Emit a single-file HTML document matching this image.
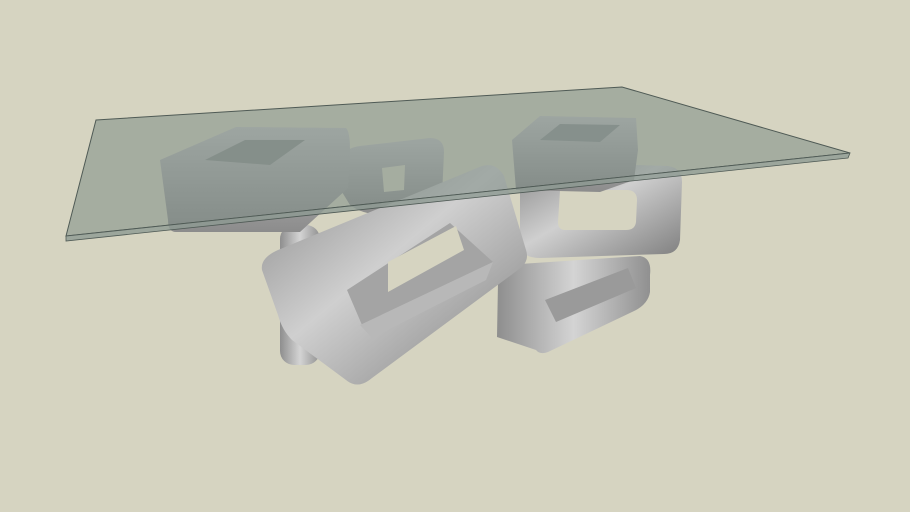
<!DOCTYPE html>
<html><head><meta charset="utf-8"><style>
html,body{margin:0;padding:0;background:#d6d4c1;width:910px;height:512px;overflow:hidden}
</style></head><body>
<svg width="910" height="512" viewBox="0 0 910 512" xmlns="http://www.w3.org/2000/svg">
<defs>
<linearGradient id="g1" x1="0" y1="0" x2="1" y2="1">
<stop offset="0" stop-color="#8a8a8a"/><stop offset="0.45" stop-color="#cfcfcf"/><stop offset="1" stop-color="#7e7e7e"/></linearGradient>
<linearGradient id="g2" x1="0" y1="0" x2="1" y2="0">
<stop offset="0" stop-color="#8e8e8e"/><stop offset="0.5" stop-color="#d4d4d4"/><stop offset="1" stop-color="#909090"/></linearGradient>
<linearGradient id="g3" x1="0" y1="0" x2="0" y2="1">
<stop offset="0" stop-color="#c4c4c4"/><stop offset="1" stop-color="#8c8c8c"/></linearGradient>
</defs>
<rect width="910" height="512" fill="#d6d4c1"/>
<!-- pillar -->
<rect x="280" y="225" width="40" height="140" rx="14" fill="url(#g2)"/>
<rect x="350" y="240" width="36" height="90" rx="14" fill="url(#g2)"/>
<!-- back right ring -->
<path fill-rule="evenodd" fill="url(#g1)" d="M520 170 Q525 162 540 162 L668 166 Q682 168 682 182 L680 240 Q678 254 664 254 L540 258 Q522 258 520 245 Z M560 190 L628 190 Q637 191 637 200 L636 222 Q635 230 626 230 L565 230 Q558 230 558 222 Z"/>
<!-- mid small ring -->
<path fill-rule="evenodd" fill="url(#g3)" d="M342 158 Q345 148 360 146 L430 138 Q444 138 444 152 L442 196 Q440 208 426 210 L378 214 Q362 214 350 205 L342 192 Z M382 168 L405 165 L404 190 L384 192 Z"/>
<!-- left box -->
<path fill="url(#g3)" d="M160 160 L236 127 L346 128 Q350 132 350 150 L348 188 L300 232 L176 232 Q168 232 168 220 Z"/>
<path fill="#8e9290" d="M205 160 L245 140 L305 140 L270 165 Z"/>
<!-- right box -->
<path fill="url(#g3)" d="M512 140 L540 116 L636 118 L638 150 L634 180 L600 192 L516 190 Z"/>
<path fill="#909494" d="M540 140 L560 124 L620 125 L600 142 Z"/>
<!-- right lower ring -->
<path fill="url(#g2)" d="M498 282 L520 264 L640 256 Q652 258 650 275 L650 292 Q648 305 632 312 L548 352 Q540 355 536 350 L497 337 Z"/>
<path fill="#9a9a9a" d="M545 300 L628 268 L636 288 L556 322 Z"/>
<!-- big ring -->
<path fill="url(#g1)" d="M262 270 Q260 258 278 250 L482 166 Q496 162 504 176 L526 250 Q530 262 518 270 L372 378 Q358 390 346 380 L292 340 Q282 330 278 315 Z"/>
<path fill="#a4a4a4" d="M347 290 L450 223 L493 262 L362 325 Z"/>
<path fill="#d6d4c1" d="M388 262 L456 226 L464 250 L388 292 Z"/>
<path fill="#b8b8b8" d="M360 325 L493 262 L486 280 L372 338 Z"/>
<!-- glass -->
<polygon points="96,120 622,87 850,153 66,236" fill="#7d8d85" fill-opacity="0.55" stroke="#4f5a55" stroke-width="1"/>
<polygon points="66,236 850,153 848,158 66,241" fill="#8d9a92" fill-opacity="0.8" stroke="#4f5a55" stroke-width="0.8"/>
</svg>
</body></html>
